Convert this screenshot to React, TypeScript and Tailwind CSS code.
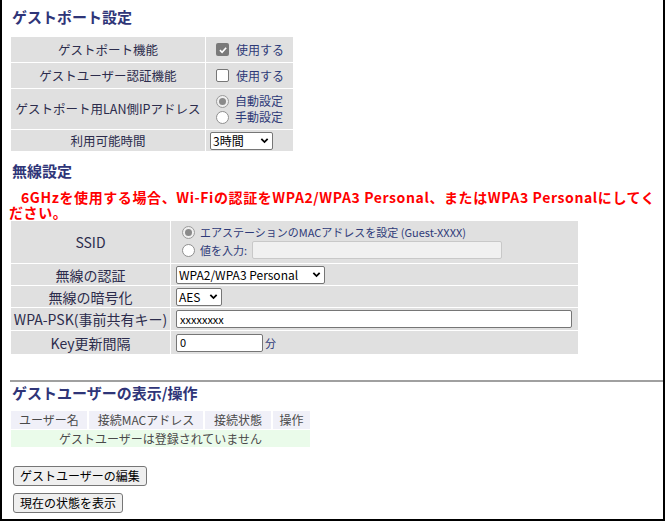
import type { ReactNode } from "react";

const LABEL = "flex items-center justify-center bg-[#e0e0e0] leading-[14px] text-[#2c2c4c]";
const VALUE = "flex items-center bg-[#e0e0e0] text-[12px] leading-[14px] text-[#2e3a78]";
const HEADING = "text-[15px] font-bold leading-[18px] text-[#2f3578]";

function Check({ checked }: { checked: boolean }) {
  return checked ? (
    <span className="flex h-[13px] w-[13px] items-center justify-center rounded-[2px] bg-[#7a7a7a]">
      <svg viewBox="0 0 12 12" className="h-[10px] w-[10px]">
        <path d="M2.3 6.2 4.9 8.7 9.8 3.3" fill="none" stroke="white" strokeWidth="2" />
      </svg>
    </span>
  ) : (
    <span className="h-[13px] w-[13px] rounded-[2px] border border-[#767676] bg-white" />
  );
}

function Radio({ checked }: { checked?: boolean }) {
  return (
    <span
      className={`flex h-[13px] w-[13px] shrink-0 items-center justify-center rounded-full border ${
        checked ? "border-[#9a9a9a] bg-[#efefef]" : "border-[#8f8f8f] bg-white"
      }`}
    >
      {checked && <span className="h-[7px] w-[7px] rounded-full bg-[#8a8a8a]" />}
    </span>
  );
}

function Chevron() {
  return (
    <svg viewBox="0 0 10 10" className="h-[9px] w-[9px] shrink-0">
      <path d="M1.5 3.2 5 6.7 8.5 3.2" fill="none" stroke="black" strokeWidth="2" />
    </svg>
  );
}

function Select({ value, w }: { value: string; w: string }) {
  return (
    <span
      className={`flex h-[18px] items-center justify-between rounded-[2px] border border-[#767676] bg-white pl-[2px] pr-[3px] text-[12px] leading-[14px] text-black ${w}`}
    >
      <span>{value}</span>
      <Chevron />
    </span>
  );
}

function Input({ value, w, disabled }: { value?: string; w: string; disabled?: boolean }) {
  return (
    <span
      className={`flex h-[18px] items-center rounded-[2px] border px-[3px] text-[11px] leading-[13px] text-black ${w} ${
        disabled ? "border-[#c8c8c8] bg-[#f0f0f0]" : "border-[#767676] bg-white"
      }`}
    >
      {value}
    </span>
  );
}

function Btn({ children }: { children: ReactNode }) {
  return (
    <button
      type="button"
      className="flex h-[20px] items-center rounded-[3px] border border-[#767676] bg-[#efefef] px-[6px] text-[12px] leading-[14px] text-black"
    >
      {children}
    </button>
  );
}

export default function App() {
  return (
    <div className="h-[521px] w-[665px] overflow-hidden border-x-2 border-b-2 border-black bg-white font-['Noto_Sans_CJK_JP',sans-serif]">
      <div className="pl-[9px] pt-[8px]">
        {/* ゲストポート設定 */}
        <h2 className={`${HEADING} pl-[1px]`}>ゲストポート設定</h2>
        <div className="mt-[11px] grid w-fit grid-cols-[194px_87px] gap-px text-[12.5px]">
          <div className={`${LABEL} h-[25px]`}>ゲストポート機能</div>
          <div className={`${VALUE} gap-[7px] pl-[10px]`}>
            <Check checked />
            使用する
          </div>
          <div className={`${LABEL} h-[25px]`}>ゲストユーザー認証機能</div>
          <div className={`${VALUE} gap-[7px] pl-[10px]`}>
            <Check checked={false} />
            使用する
          </div>
          <div className={`${LABEL} h-[40px]`}>ゲストポート用LAN側IPアドレス</div>
          <div className={`${VALUE} flex-col items-start justify-center gap-[2px] pl-[10px]`}>
            <span className="flex items-center gap-[6px]">
              <Radio checked />
              自動設定
            </span>
            <span className="flex items-center gap-[6px]">
              <Radio />
              手動設定
            </span>
          </div>
          <div className={`${LABEL} h-[21px]`}>利用可能時間</div>
          <div className={`${VALUE} pl-[4px]`}>
            <Select value="3時間" w="w-[63px]" />
          </div>
        </div>

        {/* 無線設定 */}
        <h2 className={`${HEADING} mt-[11px] pl-[1px]`}>無線設定</h2>
        <p className="-ml-[2px] mt-[10px] whitespace-nowrap text-[14px] font-bold leading-[15px] tracking-[0.6px] text-[#ff0000]">
          <span className="pl-[12px]">6GHzを使用する場合、Wi-Fiの認証をWPA2/WPA3 Personal、またはWPA3 Personalにしてく</span>
          <br />
          ださい。
        </p>
        <div className="mt-[1px] grid w-fit grid-cols-[159px_407px] gap-px text-[14px]">
          <div className={`${LABEL} h-[42px]`}>SSID</div>
          <div className={`${VALUE} flex-col items-start justify-center gap-[2px] pl-[11px]`}>
            <span className="flex items-center gap-[5px] text-[11px]">
              <Radio checked />
              エアステーションのMACアドレスを設定 (Guest-XXXX)
            </span>
            <span className="flex items-center gap-[5px] text-[11px]">
              <Radio />
              値を入力:
              <Input w="w-[250px]" disabled />
            </span>
          </div>
          <div className={`${LABEL} h-[21px]`}>無線の認証</div>
          <div className={`${VALUE} pl-[5px]`}>
            <Select value="WPA2/WPA3 Personal" w="w-[149px]" />
          </div>
          <div className={`${LABEL} h-[21px]`}>無線の暗号化</div>
          <div className={`${VALUE} pl-[5px]`}>
            <Select value="AES" w="w-[46px]" />
          </div>
          <div className={`${LABEL} h-[22px]`}>WPA-PSK(事前共有キー)</div>
          <div className={`${VALUE} pl-[5px]`}>
            <Input value="xxxxxxxx" w="w-[396px]" />
          </div>
          <div className={`${LABEL} h-[23px]`}>Key更新間隔</div>
          <div className={`${VALUE} gap-[2px] pl-[5px]`}>
            <Input value="0" w="w-[87px]" />
            <span className="text-[11px]">分</span>
          </div>
        </div>

        {/* ゲストユーザーの表示/操作 */}
        <div className="-ml-[1px] mt-[26px] h-[2px] bg-[#a0a0a0]" />
        <h2 className={`${HEADING} mt-[2px] pl-[1px]`}>ゲストユーザーの表示/操作</h2>
        <div className="mt-[9px] grid w-fit grid-cols-[76px_114px_66px_37px] gap-x-[2px] gap-y-px text-[12px] leading-[14px] text-[#4a4a4a]">
          <div className="flex h-[18px] items-center justify-center bg-[#f0f0f8]">ユーザー名</div>
          <div className="flex h-[18px] items-center justify-center bg-[#f0f0f8]">接続MACアドレス</div>
          <div className="flex h-[18px] items-center justify-center bg-[#f0f0f8]">接続状態</div>
          <div className="flex h-[18px] items-center justify-center bg-[#f0f0f8]">操作</div>
          <div className="col-span-4 flex h-[17px] items-center justify-center bg-[#eafbea]">
            ゲストユーザーは登録されていません
          </div>
        </div>

        <div className="mt-[19px] flex flex-col items-start gap-[7px] pl-[2px]">
          <Btn>ゲストユーザーの編集</Btn>
          <Btn>現在の状態を表示</Btn>
        </div>
      </div>
    </div>
  );
}
